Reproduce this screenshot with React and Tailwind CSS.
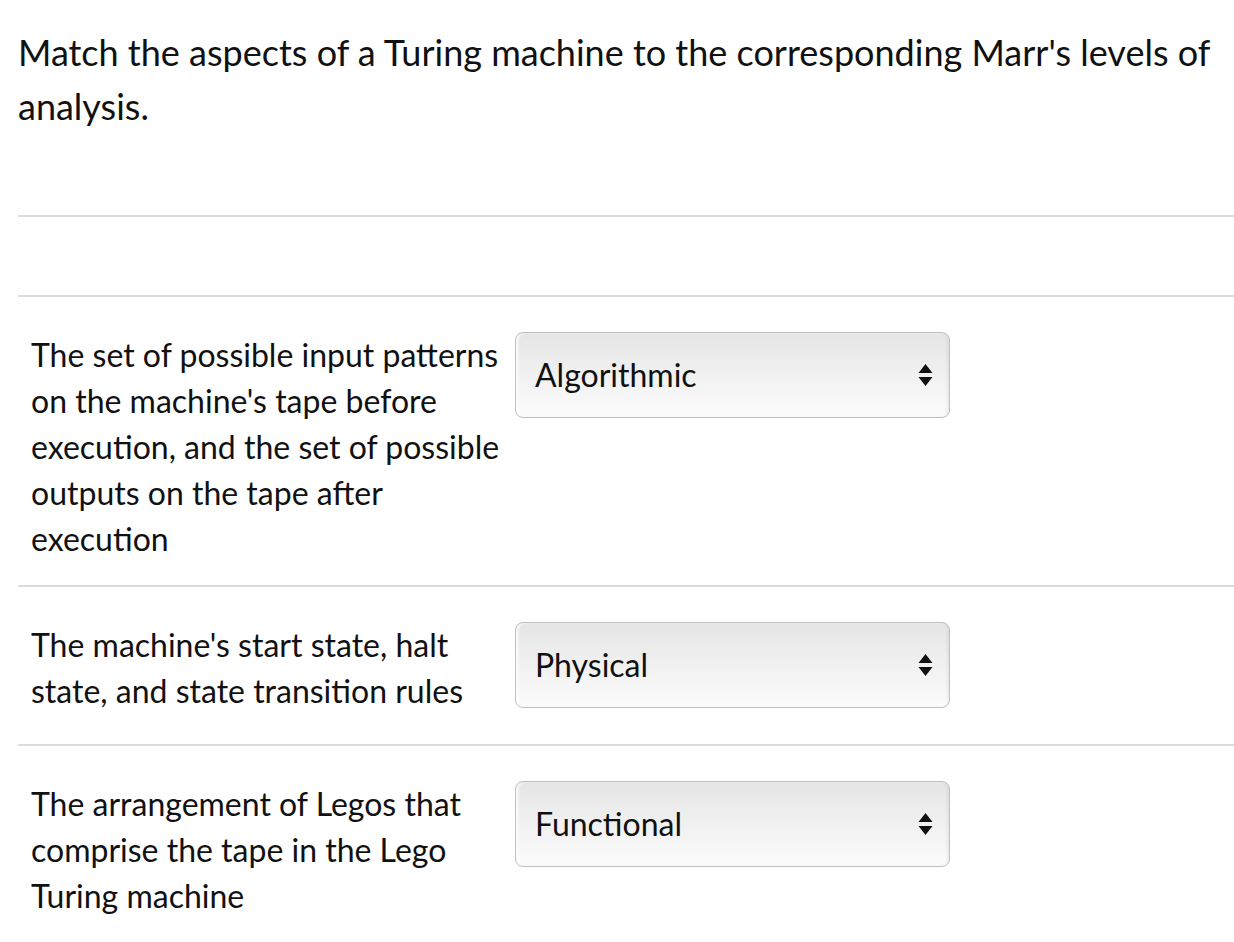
import React, { useState } from 'react';

const rows = [
  {
    id: 1,
    text: 'The set of possible input patterns on the machine\'s tape before execution, and the set of possible outputs on the tape after execution',
    value: 'Algorithmic',
  },
  {
    id: 2,
    text: 'The machine\'s start state, halt state, and state transition rules',
    value: 'Physical',
  },
  {
    id: 3,
    text: 'The arrangement of Legos that comprise the tape in the Lego Turing machine',
    value: 'Functional',
  },
];

const options = ['[ Choose ]', 'Functional', 'Algorithmic', 'Physical'];

function Arrows() {
  return (
    <svg width="15" height="24" viewBox="0 0 15 24" className="shrink-0">
      <path d="M7.5 1 L14.5 10 L0.5 10 Z" fill="#111" />
      <path d="M7.5 23 L14.5 14 L0.5 14 Z" fill="#111" />
    </svg>
  );
}

function MatchSelect({ value, onChange }) {
  return (
    <div className="relative w-[435px] h-[86px] mb-[13px] shrink-0 rounded-[8px] border border-[#bfbfbf] bg-gradient-to-b from-[#e5e5e5] to-[#fcfcfc] shadow-[inset_2px_0_3px_rgba(255,255,255,0.9),inset_-2px_0_3px_rgba(0,0,0,0.06)]">
      <select
        value={value}
        onChange={(e) => onChange(e.target.value)}
        className="appearance-none w-full h-full bg-transparent pl-[19px] pr-10 text-[32px] text-[#111] outline-none cursor-pointer"
      >
        {options.map(o => <option key={o} value={o}>{o}</option>)}
      </select>
      <div className="pointer-events-none absolute right-[16px] top-1/2 -translate-y-1/2 flex">
        <Arrows />
      </div>
    </div>
  );
}

export default function App() {
  const [answers, setAnswers] = useState(rows.reduce((a, r) => ({ ...a, [r.id]: r.value }), {}));

  return (
    <div className="min-h-screen bg-white text-[#111]" style={{ fontFamily: 'Lato, "Open Sans", sans-serif' }}>
      <div className="pl-[18px] pt-[25px]">
        <p className="text-[36px] leading-[54px] pr-4">
          Match the aspects of a Turing machine to the corresponding Marr's levels of analysis.
        </p>
        <div className="mt-[82px] border-t-2 border-[#dcdcdc] h-[80px]"></div>
        {rows.map(r => (
          <div key={r.id} className="border-t-2 border-[#dcdcdc] pt-[35px] pb-[23px] pl-[13px] flex items-start gap-[12px]">
            <div className="w-[472px] text-[32px] leading-[46px]">{r.text}</div>
            <MatchSelect value={answers[r.id]} onChange={(v) => setAnswers({ ...answers, [r.id]: v })} />
          </div>
        ))}
      </div>
    </div>
  );
}
